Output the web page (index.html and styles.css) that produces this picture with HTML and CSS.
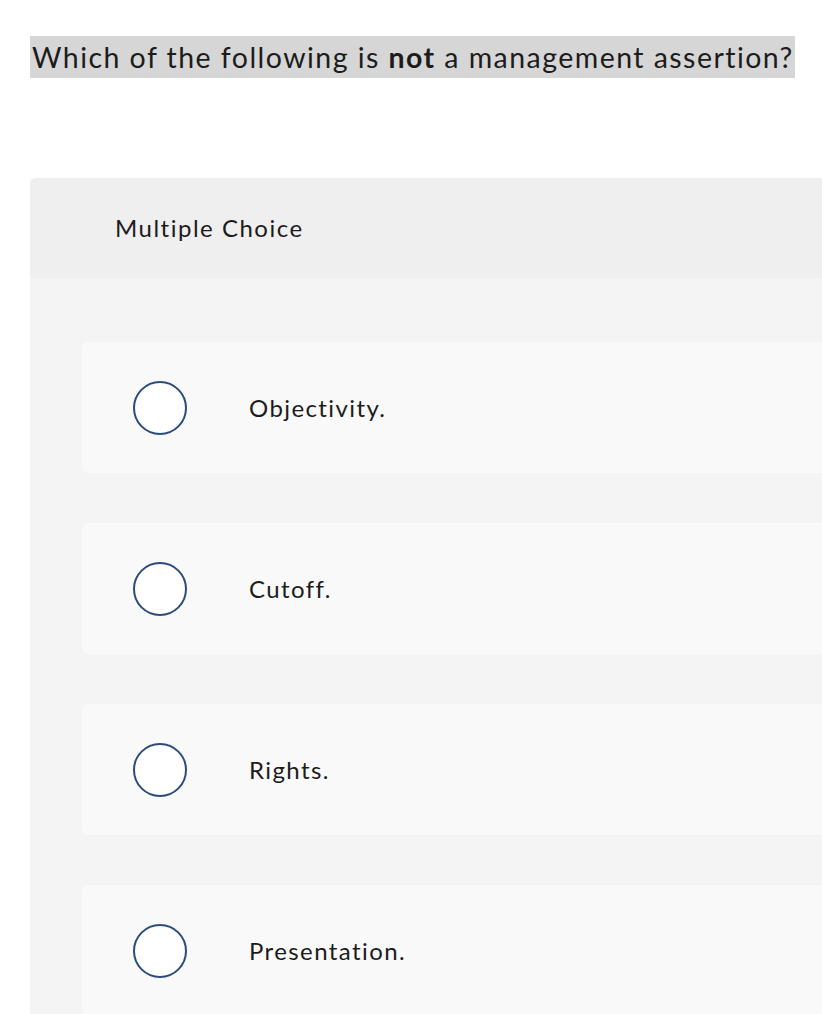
FILE: index.html
```html
<!DOCTYPE html>
<html lang="en">
<head>
	<meta charset="UTF-8">
	<title>Multiple Choice</title>
	<link rel="stylesheet" href="styles.css">
</head>
<body>
	<div class="prompt">
		<span class="prompt-text">Which of the following is <strong>not</strong> a management assertion?</span>
	</div>

	<div class="question">
		<div class="question-head">Multiple Choice</div>
		<div class="choices">
			<label class="choice">
				<input type="radio" name="answer" />
				<span class="radio"></span>
				<span class="choice-text">Objectivity.</span>
			</label>
			<label class="choice">
				<input type="radio" name="answer" />
				<span class="radio"></span>
				<span class="choice-text">Cutoff.</span>
			</label>
			<label class="choice">
				<input type="radio" name="answer" />
				<span class="radio"></span>
				<span class="choice-text">Rights.</span>
			</label>
			<label class="choice">
				<input type="radio" name="answer" />
				<span class="radio"></span>
				<span class="choice-text">Presentation.</span>
			</label>
		</div>
	</div>
</body>
</html>
```

FILE: styles.css
```css
*, *:after, *:before { box-sizing: border-box; }
html, body { margin: 0; padding: 0; background: #fff; font-family: Lato, "Open Sans", sans-serif; color: #1c1c1c; }
body { padding: 36px 0 0 30px; overflow: hidden; height: 1014px; }

/* prompt */
.prompt { display: inline-block; background: #d6d6d6; padding: 0 1px 0 2px; height: 42px; line-height: 42px; font-size: 28.5px; letter-spacing: 1.45px; }
.prompt strong { font-weight: 700; }

/* question card */
.question { margin-top: 100px; background: #f4f4f4; border-radius: 6px 0 0 0; }
.question-head { background: #efefef; height: 100px; line-height: 100px; padding-left: 85px; font-size: 24px; letter-spacing: 1.5px; border-radius: 6px 0 0 0; }

.choices { padding: 64px 0 0 52px; display: flex; flex-direction: column; gap: 50px; }
.choice { display: flex; align-items: center; height: 131px; background: #f9f9f9; border-radius: 6px 0 0 6px; padding-left: 51px; cursor: pointer; }
.choice input { display: none; }
.radio { width: 54px; height: 54px; border: 2px solid #2a4b7c; border-radius: 50%; background: #fff; flex: 0 0 auto; }
.choice-text { margin-left: 62px; font-size: 24px; letter-spacing: 1.4px; }
```
